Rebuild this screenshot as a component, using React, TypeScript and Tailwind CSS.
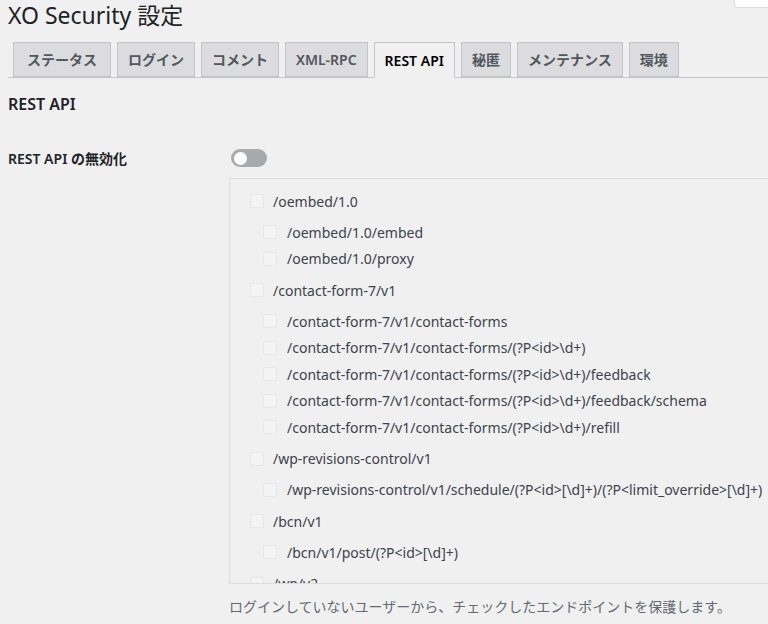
const font = { fontFamily: '"Noto Sans", "Noto Sans CJK JP", sans-serif' }

const tabs = ['ステータス', 'ログイン', 'コメント', 'XML-RPC', 'REST API', '秘匿', 'メンテナンス', '環境']

const groups = [
  { path: '/oembed/1.0', children: ['/oembed/1.0/embed', '/oembed/1.0/proxy'] },
  {
    path: '/contact-form-7/v1',
    children: [
      '/contact-form-7/v1/contact-forms',
      '/contact-form-7/v1/contact-forms/(?P<id>\\d+)',
      '/contact-form-7/v1/contact-forms/(?P<id>\\d+)/feedback',
      '/contact-form-7/v1/contact-forms/(?P<id>\\d+)/feedback/schema',
      '/contact-form-7/v1/contact-forms/(?P<id>\\d+)/refill'
    ]
  },
  {
    path: '/wp-revisions-control/v1',
    children: ['/wp-revisions-control/v1/schedule/(?P<id>[\\d]+)/(?P<limit_override>[\\d]+)']
  },
  { path: '/bcn/v1', children: ['/bcn/v1/post/(?P<id>[\\d]+)'] },
  { path: '/wp/v2', children: [] }
]

const Check = () => (
  <span className="w-[14px] h-[14px] shrink-0 rounded-[2px] border border-[#e6e6e6] bg-[#f4f4f4]" />
)

const App = () => {
  return (
    <div
      className="relative w-[768px] h-[624px] overflow-hidden bg-[#f0f0f1] text-[#1d2327]"
      style={font}
    >
      <div className="absolute top-0 right-0 w-[34px] h-[8px] bg-white border-l border-b border-[#dcdcde] rounded-bl-[3px]" />

      <div className="pl-2">
        <h1 className="text-[23px] leading-[30px] pt-0 font-normal">XO Security 設定</h1>

        <div className="mt-[12px] flex gap-[6px] pl-[5px] border-b border-[#c3c4c7]">
          {tabs.map((t, i) => (
            <div
              key={t}
              className={
                t === 'REST API'
                  ? 'h-[36px] -mb-px px-[10px] flex items-center text-[14px] font-semibold border border-[#c3c4c7] border-b-[#f0f0f1] bg-[#f0f0f1] text-[#000]'
                  : i === 0
                    ? 'h-[35px] px-[13px] flex items-center text-[14px] font-semibold border border-[#c3c4c7] bg-[#dcdcde] text-[#50575e]'
                    : 'h-[35px] px-[10px] flex items-center text-[14px] font-semibold border border-[#c3c4c7] bg-[#dcdcde] text-[#50575e]'
              }
            >
              {t}
            </div>
          ))}
        </div>

        <h2 className="mt-[15px] text-[16px] font-semibold leading-[22px]">REST API</h2>

        <div className="mt-[34px] flex">
          <div className="w-[221px] shrink-0 text-[14px] font-semibold leading-[20px]">
            REST API の無効化
          </div>
          <div className="flex-1">
            <div className="w-[36px] h-[18px] rounded-full bg-[#a7aaad] ml-[2px] flex items-center px-[3px]">
              <span className="w-[13px] h-[13px] rounded-full bg-white" />
            </div>

            <div className="mt-[11px] w-[600px] h-[406px] overflow-hidden border border-[#dcdcde] pt-[9px] pl-[20px] text-[14px] text-[#3c434a]">
              {groups.map((g) => (
                <div key={g.path} className="mb-[5px]">
                  <div className="h-[26px] flex items-center gap-[9px] mb-[5px]">
                    <Check />
                    <span>{g.path}</span>
                  </div>
                  {g.children.map((c) => (
                    <div key={c} className="h-[26.5px] pl-[13px] flex items-center gap-[10px] whitespace-nowrap">
                      <Check />
                      <span>{c}</span>
                    </div>
                  ))}
                </div>
              ))}
            </div>

            <p className="mt-[13px] text-[14px] leading-[20px] text-[#646970] whitespace-nowrap">
              ログインしていないユーザーから、チェックしたエンドポイントを保護します。
            </p>
          </div>
        </div>
      </div>
    </div>
  )
}

export default App
